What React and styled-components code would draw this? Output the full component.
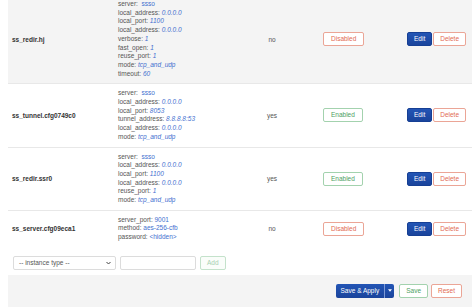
import React from 'react';
import styled, { createGlobalStyle } from 'styled-components';

const GlobalStyle = createGlobalStyle`
  html, body {
    margin: 0;
    background: #fff;
    overflow: hidden;
  }
  body {
    padding: 0 2px 0 8px;
    font-family: "Liberation Sans", Arial, sans-serif;
    font-size: 6.5px;
    color: #404040;
  }
`;

const Page = styled.div`
  margin-top: -5px;
`;

const Row = styled.div`
  display: grid;
  grid-template-columns: 106px 138px 40px 100px 1fr;
  align-items: center;
  padding: 5px 0;
  background: ${p => (p.shaded ? '#f4f4f4' : '#fff')};
  border-bottom: ${p => (p.last ? 'none' : '1px solid #e8e8e8')};
`;

const Name = styled.div`
  padding-left: 4px;
  font-weight: bold;
  color: #333;
`;

const Settings = styled.div`
  padding-left: 4px;
  line-height: 8.7px;
  color: #555;
  white-space: nowrap;
`;

const Value = styled.span`
  color: #3f6fcf;
  font-style: ${p => (p.plain ? 'normal' : 'italic')};
`;

const Flag = styled.div`
  text-align: center;
  color: #555;
`;

const StatusCell = styled.div`
  padding-left: 31px;
`;

const Actions = styled.div`
  display: flex;
  justify-content: flex-end;
  gap: 1px;
  padding-right: 6px;
`;

const tones = {
  red: { border: '#eba596', color: '#e26a52', bg: '#fff' },
  green: { border: '#a3d2ae', color: '#4e9e62', bg: '#fff' },
  blue: { border: '#163f94', color: '#fff', bg: 'linear-gradient(#2355b5, #1a449c)' },
  faded: { border: '#c4e2cb', color: '#a6cfb0', bg: '#fafdfa' },
};

const Button = styled.button`
  box-sizing: border-box;
  height: 14px;
  padding: 0 ${p => p.pad || 6}px;
  border: 1px solid ${p => tones[p.tone].border};
  border-radius: 2px;
  background: ${p => tones[p.tone].bg};
  color: ${p => tones[p.tone].color};
  font-family: "Liberation Sans", Arial, sans-serif;
  font-size: 6.5px;
  line-height: 12px;
  white-space: nowrap;
  cursor: pointer;
`;

const AddRow = styled.div`
  display: flex;
  align-items: center;
  gap: 4px;
  padding: 9px 0 5px 5px;
`;

const Select = styled.div`
  box-sizing: border-box;
  width: 103px;
  height: 14px;
  display: flex;
  align-items: center;
  justify-content: space-between;
  padding: 0 4px 0 5px;
  border: 1px solid #dcdcdc;
  border-radius: 2px;
  color: #555;
  background: #fff;
`;

const TextInput = styled.div`
  box-sizing: border-box;
  width: 76px;
  height: 14px;
  border: 1px solid #dcdcdc;
  border-radius: 2px;
  background: #fff;
`;

const Footer = styled.div`
  display: flex;
  justify-content: flex-end;
  align-items: flex-start;
  gap: 3px;
  height: 32px;
  box-sizing: border-box;
  padding: 9px 10px 0 0;
  background: #f4f4f4;
`;

const Split = styled.div`
  display: flex;
  height: 14px;
  border-radius: 2px;
  overflow: hidden;
  background: linear-gradient(#2355b5, #1a449c);
  color: #fff;
  margin-right: 2px;
`;

const SplitMain = styled.div`
  display: flex;
  align-items: center;
  padding: 0 5px;
  border-right: 1px solid #7d9ad6;
`;

const SplitCaret = styled.div`
  display: flex;
  align-items: center;
  justify-content: center;
  width: 9px;
`;

const rows = [
  {
    name: 'ss_redir.hj',
    enabled: false,
    shaded: true,
    settings: [
      ['server', 'ssso', true],
      ['local_address', '0.0.0.0'],
      ['local_port', '1100'],
      ['local_address', '0.0.0.0'],
      ['verbose', '1'],
      ['fast_open', '1'],
      ['reuse_port', '1'],
      ['mode', 'tcp_and_udp'],
      ['timeout', '60'],
    ],
  },
  {
    name: 'ss_tunnel.cfg0749c0',
    enabled: true,
    settings: [
      ['server', 'ssso', true],
      ['local_address', '0.0.0.0'],
      ['local_port', '8053'],
      ['tunnel_address', '8.8.8.8:53'],
      ['local_address', '0.0.0.0'],
      ['mode', 'tcp_and_udp'],
    ],
  },
  {
    name: 'ss_redir.ssr0',
    enabled: true,
    settings: [
      ['server', 'ssso', true],
      ['local_address', '0.0.0.0'],
      ['local_port', '1100'],
      ['local_address', '0.0.0.0'],
      ['reuse_port', '1'],
      ['mode', 'tcp_and_udp'],
    ],
  },
  {
    name: 'ss_server.cfg09eca1',
    enabled: false,
    last: true,
    settings: [
      ['server_port', '9001', true],
      ['method', 'aes-256-cfb', true],
      ['password', '<hidden>', true],
    ],
  },
];

const Chevron = () => (
  <svg width="5" height="4" viewBox="0 0 10 6">
    <path d="M1 1l4 4 4-4" fill="none" stroke="#444" strokeWidth="2" />
  </svg>
);

const Caret = () => (
  <svg width="4" height="3" viewBox="0 0 8 5">
    <path d="M0 0h8L4 5z" fill="#fff" />
  </svg>
);

export default function App() {
  return (
    <Page>
      <GlobalStyle />
      {rows.map(r => (
        <Row key={r.name} shaded={r.shaded} last={r.last}>
          <Name>{r.name}</Name>
          <Settings>
            {r.settings.map(([k, v, plain], i) => (
              <div key={i}>
                {k}:{k === 'server' ? '\u00a0 ' : ' '}
                <Value plain={plain}>{v}</Value>
              </div>
            ))}
          </Settings>
          <Flag>{r.enabled ? 'yes' : 'no'}</Flag>
          <StatusCell>
            {r.enabled ? (
              <Button tone="green" pad={7}>Enabled</Button>
            ) : (
              <Button tone="red" pad={7}>Disabled</Button>
            )}
          </StatusCell>
          <Actions>
            <Button tone="blue">Edit</Button>
            <Button tone="red">Delete</Button>
          </Actions>
        </Row>
      ))}
      <AddRow>
        <Select>
          <span>-- instance type --</span>
          <Chevron />
        </Select>
        <TextInput />
        <Button tone="faded">Add</Button>
      </AddRow>
      <Footer>
        <Split>
          <SplitMain>Save &amp; Apply</SplitMain>
          <SplitCaret>
            <Caret />
          </SplitCaret>
        </Split>
        <Button tone="green">Save</Button>
        <Button tone="red">Reset</Button>
      </Footer>
    </Page>
  );
}
